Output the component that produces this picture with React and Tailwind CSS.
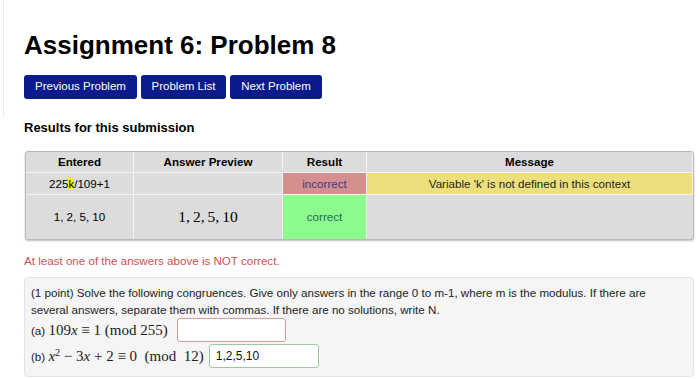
import React from "react";

const sans = { fontFamily: '"Liberation Sans", Arial, sans-serif' };
const serif = { fontFamily: '"Liberation Serif", "Times New Roman", serif' };

function Cell({ className = "", children }) {
  return (
    <div className={`flex items-center justify-center border-r border-b border-[#f4f4f4] last:border-r-0 ${className}`}>
      {children}
    </div>
  );
}

export default function App() {
  return (
    <div className="w-[700px] h-[379px] bg-white overflow-hidden relative text-black" style={sans}>
      <div className="absolute left-[3px] top-0 h-[118px] w-px bg-[#ececec]" />
      <div className="pl-[24px] pr-[6px]">
        <h1 className="pt-[30px] text-[26px] leading-[30px] font-bold">Assignment 6: Problem 8</h1>
        <div className="mt-[15px] flex gap-[4px] h-[24px]">
          <button className="h-[24px] w-[113px] rounded-[3px] bg-[#0b1b8c] text-white text-[11.5px] leading-none">Previous Problem</button>
          <button className="h-[24px] w-[85px] rounded-[3px] bg-[#0b1b8c] text-white text-[11.5px] leading-none">Problem List</button>
          <button className="h-[24px] w-[92px] rounded-[3px] bg-[#0b1b8c] text-white text-[11.5px] leading-none">Next Problem</button>
        </div>
        <div className="mt-[21px] text-[13px] leading-[16px] font-bold">Results for this submission</div>

        <div className="mt-[15px] ml-[1px] w-[669px] rounded-[3px] border border-[#b9b9b9] bg-[#dcdcdc] shadow-[0_1px_2px_rgba(0,0,0,0.25)] overflow-hidden">
          <div className="grid grid-cols-[108px_149px_84px_326px] text-[11.6px] leading-none">
            <Cell className="h-[21px] font-bold">Entered</Cell>
            <Cell className="h-[21px] font-bold">Answer Preview</Cell>
            <Cell className="h-[21px] font-bold">Result</Cell>
            <Cell className="h-[21px] font-bold">Message</Cell>

            <Cell className="h-[22px]">225<span className="bg-[#f5f10a]">k</span>/109+1</Cell>
            <Cell className="h-[22px]"></Cell>
            <Cell className="h-[22px] bg-[#d68f8f] text-[#3f3a86]">incorrect</Cell>
            <Cell className="h-[22px] bg-[#ede07c] text-[#222]">Variable 'k' is not defined in this context</Cell>

            <Cell className="h-[44px] border-b-0">1, 2, 5, 10</Cell>
            <Cell className="h-[44px] border-b-0">
              <span className="text-[15.5px]" style={serif}>1,{"\u2009"}2,{"\u2009"}5,{"\u2009"}10</span>
            </Cell>
            <Cell className="h-[44px] border-b-0 bg-[#8cfa8c] text-[#1f6a5c]">correct</Cell>
            <Cell className="h-[44px] border-b-0"></Cell>
          </div>
        </div>

        <div className="mt-[14px] text-[11.6px] leading-[14px] text-[#c95457]">At least one of the answers above is NOT correct.</div>

        <div className="mt-[9px] w-[670px] h-[100px] rounded-[4px] border border-[#e3e3e3] bg-[#f5f5f5] px-[6px] pt-[6px] text-[11.6px] leading-[17px] text-[#222]">
          <div>
            (1 point) Solve the following congruences. Give only answers in the range 0 to m-1, where m is the modulus. If there are
            <br />
            several answers, separate them with commas. If there are no solutions, write N.
          </div>
          <div className="flex items-center h-[24px]">
            <span>(a)&nbsp;</span>
            <span className="text-[15px]" style={serif}>
              109<i>x</i>&nbsp;≡&nbsp;1&nbsp;(mod&nbsp;255)
            </span>
            <div className="ml-[9px] h-[24px] w-[109px] rounded-[3px] border border-[#d99a9a] bg-white" />
          </div>
          <div className="mt-[2px] flex items-center h-[24px]">
            <span>(b)&nbsp;</span>
            <span className="text-[15px]" style={serif}>
              <i>x</i><sup className="text-[10px]">2</sup>&nbsp;−&nbsp;3<i>x</i>&nbsp;+&nbsp;2&nbsp;≡&nbsp;0&nbsp;&nbsp;(mod&nbsp;&nbsp;12)
            </span>
            <div className="ml-[5px] h-[24px] w-[110px] rounded-[3px] border border-[#9cc99c] bg-white flex items-center pl-[6px] text-[12px] text-[#111]">1,2,5,10</div>
          </div>
        </div>
      </div>
    </div>
  );
}
